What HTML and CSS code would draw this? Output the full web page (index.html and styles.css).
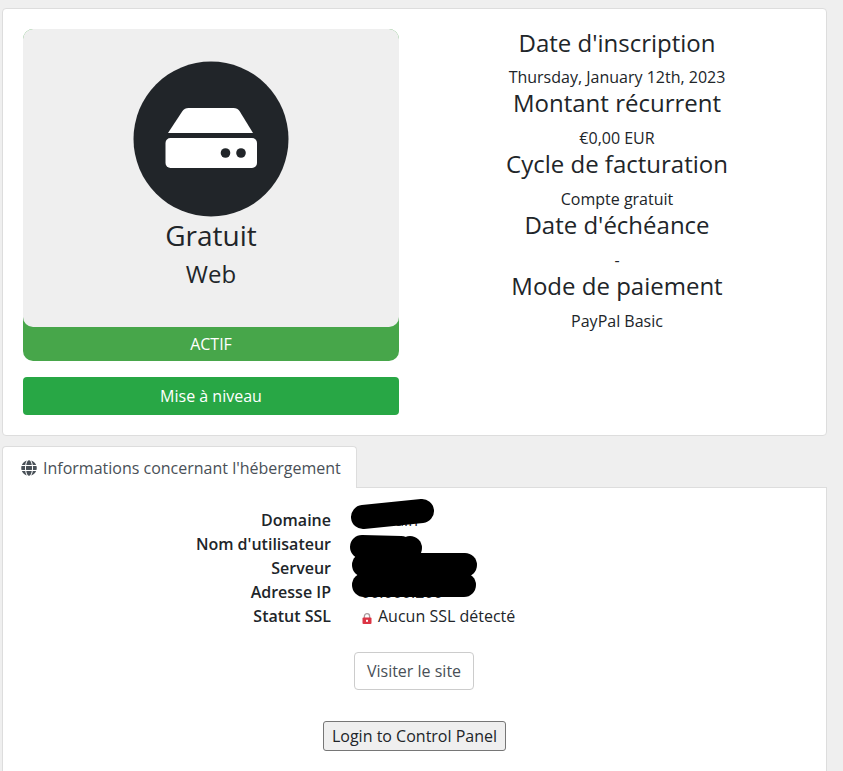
FILE: index.html
```html
<!DOCTYPE html>
<html lang="fr">
<head>
    <meta charset="UTF-8">
    <title>Informations concernant l'hébergement</title>
    <link rel="stylesheet" href="styles.css">
</head>
<body>

    <div class="card">
        <div class="product-col">
            <div class="product-box">
                <div class="product-inner">
                    <svg class="product-icon" viewBox="-0.5 -0.5 156 156" width="156" height="156">
                        <circle cx="77.5" cy="77.5" r="77.5" fill="#212529"/>
                        <path d="M34.5 71.5 L49 49.5 Q51 46.5 55 46.5 L100 46.5 Q104 46.5 106 49.5 L119.5 71.5 Z" fill="#fff"/>
                        <rect x="32" y="76.5" width="91.5" height="30" rx="5" fill="#fff"/>
                        <circle cx="92" cy="91.5" r="4.8" fill="#212529"/>
                        <circle cx="107.5" cy="91.5" r="4.8" fill="#212529"/>
                    </svg>
                    <h3 class="product-name">Gratuit</h3>
                    <h4 class="product-group">Web</h4>
                </div>
                <div class="product-status">ACTIF</div>
            </div>
            <a class="btn-upgrade" href="#">Mise à niveau</a>
        </div>
        <div class="info-col">
            <h4>Date d'inscription</h4>
            <p>Thursday, January 12th, 2023</p>
            <h4>Montant récurrent</h4>
            <p>€0,00 EUR</p>
            <h4>Cycle de facturation</h4>
            <p>Compte gratuit</p>
            <h4>Date d'échéance</h4>
            <p>-</p>
            <h4>Mode de paiement</h4>
            <p>PayPal Basic</p>
        </div>
    </div>

    <ul class="tabs">
        <li class="tab">
            <svg class="globe" viewBox="0 0 496 512" width="16" height="16"><path fill="currentColor" d="M336.5 160C322 70.7 287.8 8 248 8s-74 62.7-88.5 152h177zM152 256c0 22.2 1.2 43.5 3.3 64h185.3c2.1-20.5 3.3-41.8 3.3-64s-1.2-43.5-3.3-64H155.3c-2.1 20.5-3.3 41.8-3.3 64zm324.7-96c-28.6-67.9-86.5-120.4-158-141.6 24.4 33.8 41.2 84.7 50 141.6h108zM177.2 18.4C105.8 39.6 47.8 92.1 19.3 160h108c8.7-56.9 25.5-107.8 49.9-141.6zM487.4 192H372.7c2.1 21 3.3 42.5 3.3 64s-1.2 43-3.3 64h114.6c5.5-20.5 8.6-41.8 8.6-64s-3.1-43.5-8.5-64zM120 256c0-21.5 1.2-43 3.3-64H8.6C3.2 212.5 0 233.8 0 256s3.2 43.5 8.6 64h114.6c-2-21-3.2-42.5-3.2-64zm39.5 96c14.5 89.3 48.7 152 88.5 152s74-62.7 88.5-152h-177zm159.3 141.6c71.4-21.2 129.4-73.7 158-141.6h-108c-8.8 56.9-25.6 107.8-50 141.6zM19.3 352c28.6 67.9 86.5 120.4 158 141.6-24.4-33.8-41.2-84.7-50-141.6h-108z"/></svg>
            Informations concernant l'hébergement
        </li>
    </ul>

    <div class="tab-content">
        <div class="details">
            <div class="detail-label">Domaine</div>
            <div class="detail-value">domain</div>
            <div class="detail-label">Nom d'utilisateur</div>
            <div class="detail-value"></div>
            <div class="detail-label">Serveur</div>
            <div class="detail-value"></div>
            <div class="detail-label">Adresse IP</div>
            <div class="detail-value">00.000.200</div>
            <div class="detail-label">Statut SSL</div>
            <div class="detail-value">
                <svg class="lock" viewBox="0 0 12 12" width="12" height="12">
                    <path d="M3.4 6 V4.2 A2.6 2.6 0 0 1 8.6 4.2 V6" fill="none" stroke="#a89a9c" stroke-width="1.3"/>
                    <rect x="1.5" y="5.5" width="9" height="6.5" rx="1" fill="#dc3545"/>
                    <rect x="5" y="7.8" width="2" height="2" fill="#fff"/>
                </svg>
                Aucun SSL détecté
            </div>
            <svg class="redaction" viewBox="0 0 140 110" width="140" height="110">
                <path d="M18 22 L77 16" stroke="#000" stroke-width="24" stroke-linecap="round"/>
                <path d="M17 52 L56 53" stroke="#000" stroke-width="24" stroke-linecap="round"/>
                <circle cx="65" cy="53" r="12" fill="#000"/>
                <path d="M19 70 L120 70" stroke="#000" stroke-width="24" stroke-linecap="round"/>
                <path d="M19 90 L119 90" stroke="#000" stroke-width="24" stroke-linecap="round"/>
            </svg>
        </div>
        <div class="actions">
            <a class="btn-visit" href="#">Visiter le site</a>
            <button class="btn-login">Login to Control Panel</button>
        </div>
    </div>

</body>
</html>
```

FILE: styles.css
```css
* { box-sizing: border-box; }
html, body { height: 100%; }
body { margin: 0; padding: 8px 16px 0 2px; background: #efefef; color: #212529; font-family: "Open Sans", sans-serif; font-size: 16px; line-height: 24px; overflow: hidden; }

.card { display: flex; height: 428px; padding: 20px; background: #fff; border: 1px solid #ddd; border-radius: 4px; }
.product-col { width: 376px; flex: none; }
.product-box { background: #47a64a; border-radius: 10px; color: #fff; text-align: center; }
.product-inner { height: 298px; padding-top: 32px; background: #efefef; border-radius: 10px; color: #212529; }
.product-icon { display: block; margin: 0 auto; }
.product-name { margin: -1px 0 1px; font-size: 28px; font-weight: 400; line-height: 38px; }
.product-group { margin: 0; font-size: 24px; font-weight: 400; line-height: 38px; }
.product-status { height: 34px; line-height: 34px; }
.btn-upgrade { display: block; height: 38px; margin-top: 16px; background: #28a745; border-radius: 4px; color: #fff; line-height: 38px; text-align: center; text-decoration: none; }

.info-col { flex: 1; margin-top: -0.4px; padding-left: 29px; text-align: center; }
.info-col h4 { margin: 0 0 8px; font-size: 24px; font-weight: 400; line-height: 28.8px; white-space: nowrap; }
.info-col p { margin: 0; line-height: 24px; white-space: nowrap; }

.tabs { display: flex; margin: 10px 0 0; padding: 0; list-style: none; }
.tab { display: flex; align-items: center; gap: 6px; height: 42px; margin-bottom: -1px; padding: 0 15px 0 18px; position: relative; background: #fff; border: 1px solid #ddd; border-bottom: 0; border-radius: 4px 4px 0 0; color: #495057; }

.tab-content { height: 291px; padding-top: 20px; background: #fff; border: 1px solid #ddd; border-bottom: 0; }
.details { display: grid; grid-template-columns: 328px 1fr; position: relative; }
.detail-label { font-weight: 600; text-align: right; }
.detail-value { display: flex; align-items: center; gap: 5px; min-height: 24px; padding-left: 30px; }
.lock { margin-top: 3px; }
.redaction { position: absolute; left: 342px; top: -13px; }

.actions { display: flex; flex-direction: column; align-items: center; }
.btn-visit { width: 120px; margin: 24px 1px 0 0; height: 38px; background: #fff; border: 1px solid #ccc; border-radius: 4px; color: #495057; line-height: 36px; text-align: center; text-decoration: none; }
.btn-login { height: 30px; margin-top: 31px; padding: 0 7.5px; background: #efefef; border: 1px solid #767676; border-radius: 3px; color: #212529; font-family: inherit; font-size: 16px; }
```
